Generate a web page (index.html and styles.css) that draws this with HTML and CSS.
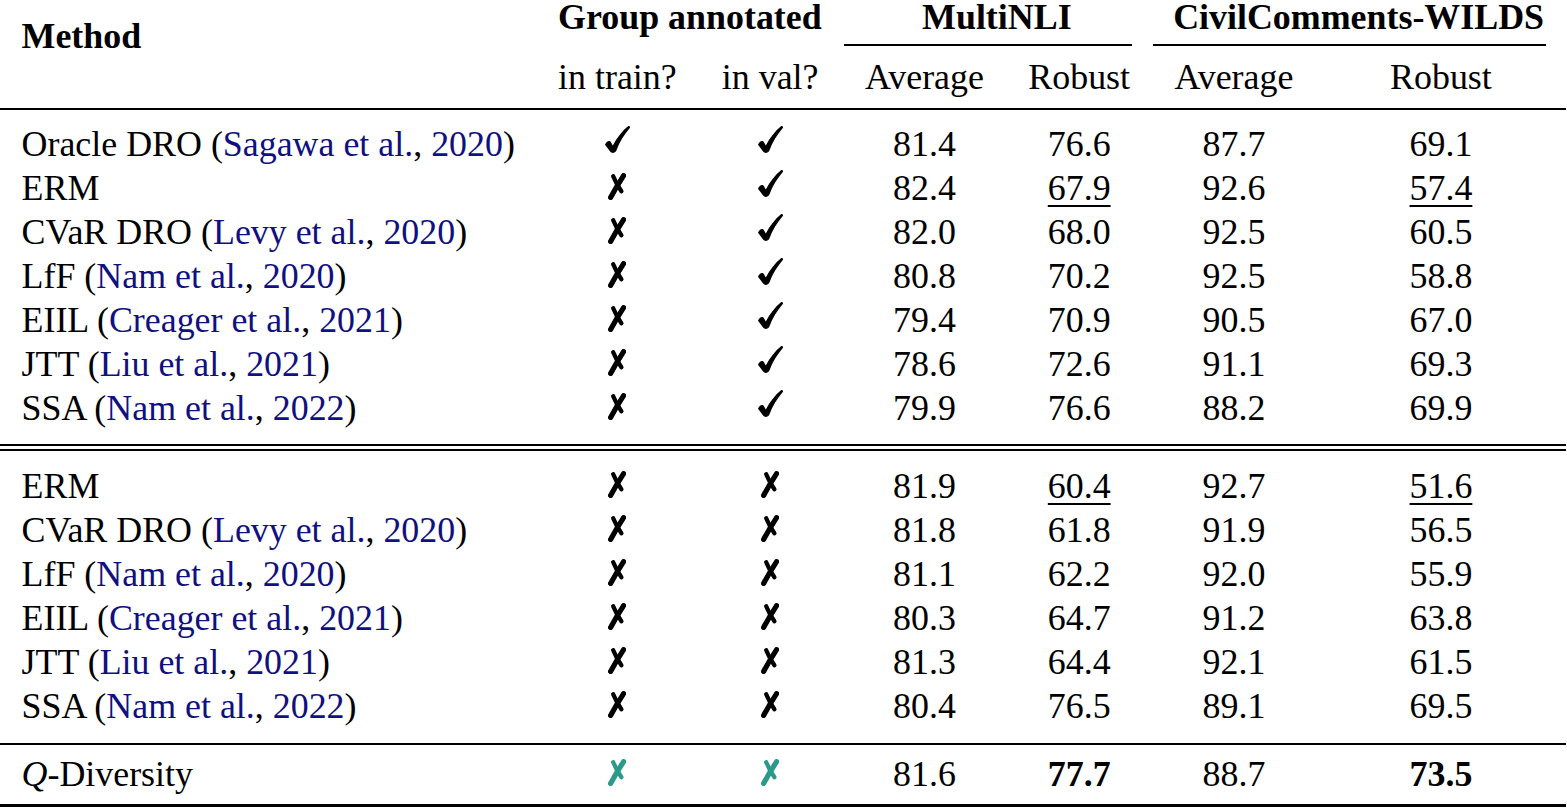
FILE: index.html
```html
<!DOCTYPE html>
<html lang="en">
<head>
<meta charset="utf-8">
<title>Results table</title>
<link rel="stylesheet" href="styles.css">
</head>
<body>
<svg class="defs" width="0" height="0" aria-hidden="true">
  <defs>
    <symbol id="cmark" viewBox="0 0 25 27">
      <path d="M0,18.8 C0.8,16.2 3,14.6 4.6,15 C5.8,15.3 6.6,17.2 7.8,19.6 C12,11.5 17.2,4.8 23,0.2 C24.2,-0.5 25.6,0.9 24.8,2.1 C19,8.8 14.6,16.2 11.4,24.4 C10.4,27 6.8,27.8 5.3,25.8 C3.6,23.5 1.8,21 0,18.8 Z" fill="currentColor"/>
    </symbol>
    <symbol id="xmark" viewBox="0 0 18 27">
      <path d="M15.6 2.6 Q8.8 13 2.6 24.4" stroke="currentColor" stroke-width="5.2" stroke-linecap="round" fill="none"/>
      <path d="M5.2 3.2 Q8.4 11 13.4 18.2" stroke="currentColor" stroke-width="4.3" stroke-linecap="round" fill="none"/>
    </symbol>
  </defs>
</svg>
<table class="results">
  <colgroup>
    <col class="w-method"><col class="w-train"><col class="w-val"><col class="w-avg"><col class="w-rob"><col class="w-avg"><col class="w-rob2">
  </colgroup>
  <thead>
    <tr class="h1">
      <th class="method" rowspan="2">Method</th>
      <th colspan="2" class="top">Group annotated</th>
      <th colspan="2" class="top"><div class="cmid">MultiNLI</div></th>
      <th colspan="2" class="top"><div class="cmid">CivilComments-WILDS</div></th>
    </tr>
    <tr class="h2">
      <th>in train?</th><th>in val?</th><th>Average</th><th>Robust</th><th>Average</th><th>Robust</th>
    </tr>
  </thead>
  <tbody class="g1">
    <tr><td class="m">Oracle DRO (<a class="cite">Sagawa et al.</a>, <a class="cite">2020</a>)</td><td><svg class="ck"><use href="#cmark"/></svg></td><td><svg class="ck"><use href="#cmark"/></svg></td><td>81.4</td><td>76.6</td><td>87.7</td><td>69.1</td></tr>
    <tr><td class="m">ERM</td><td><svg class="xk"><use href="#xmark"/></svg></td><td><svg class="ck"><use href="#cmark"/></svg></td><td>82.4</td><td><span class="ul">67.9</span></td><td>92.6</td><td><span class="ul">57.4</span></td></tr>
    <tr><td class="m">CVaR DRO (<a class="cite">Levy et al.</a>, <a class="cite">2020</a>)</td><td><svg class="xk"><use href="#xmark"/></svg></td><td><svg class="ck"><use href="#cmark"/></svg></td><td>82.0</td><td>68.0</td><td>92.5</td><td>60.5</td></tr>
    <tr><td class="m">LfF (<a class="cite">Nam et al.</a>, <a class="cite">2020</a>)</td><td><svg class="xk"><use href="#xmark"/></svg></td><td><svg class="ck"><use href="#cmark"/></svg></td><td>80.8</td><td>70.2</td><td>92.5</td><td>58.8</td></tr>
    <tr><td class="m">EIIL (<a class="cite">Creager et al.</a>, <a class="cite">2021</a>)</td><td><svg class="xk"><use href="#xmark"/></svg></td><td><svg class="ck"><use href="#cmark"/></svg></td><td>79.4</td><td>70.9</td><td>90.5</td><td>67.0</td></tr>
    <tr><td class="m">JTT (<a class="cite">Liu et al.</a>, <a class="cite">2021</a>)</td><td><svg class="xk"><use href="#xmark"/></svg></td><td><svg class="ck"><use href="#cmark"/></svg></td><td>78.6</td><td>72.6</td><td>91.1</td><td>69.3</td></tr>
    <tr><td class="m">SSA (<a class="cite">Nam et al.</a>, <a class="cite">2022</a>)</td><td><svg class="xk"><use href="#xmark"/></svg></td><td><svg class="ck"><use href="#cmark"/></svg></td><td>79.9</td><td>76.6</td><td>88.2</td><td>69.9</td></tr>
  </tbody>
  <tbody class="g2">
    <tr><td class="m">ERM</td><td><svg class="xk"><use href="#xmark"/></svg></td><td><svg class="xk"><use href="#xmark"/></svg></td><td>81.9</td><td><span class="ul">60.4</span></td><td>92.7</td><td><span class="ul">51.6</span></td></tr>
    <tr><td class="m">CVaR DRO (<a class="cite">Levy et al.</a>, <a class="cite">2020</a>)</td><td><svg class="xk"><use href="#xmark"/></svg></td><td><svg class="xk"><use href="#xmark"/></svg></td><td>81.8</td><td>61.8</td><td>91.9</td><td>56.5</td></tr>
    <tr><td class="m">LfF (<a class="cite">Nam et al.</a>, <a class="cite">2020</a>)</td><td><svg class="xk"><use href="#xmark"/></svg></td><td><svg class="xk"><use href="#xmark"/></svg></td><td>81.1</td><td>62.2</td><td>92.0</td><td>55.9</td></tr>
    <tr><td class="m">EIIL (<a class="cite">Creager et al.</a>, <a class="cite">2021</a>)</td><td><svg class="xk"><use href="#xmark"/></svg></td><td><svg class="xk"><use href="#xmark"/></svg></td><td>80.3</td><td>64.7</td><td>91.2</td><td>63.8</td></tr>
    <tr><td class="m">JTT (<a class="cite">Liu et al.</a>, <a class="cite">2021</a>)</td><td><svg class="xk"><use href="#xmark"/></svg></td><td><svg class="xk"><use href="#xmark"/></svg></td><td>81.3</td><td>64.4</td><td>92.1</td><td>61.5</td></tr>
    <tr><td class="m">SSA (<a class="cite">Nam et al.</a>, <a class="cite">2022</a>)</td><td><svg class="xk"><use href="#xmark"/></svg></td><td><svg class="xk"><use href="#xmark"/></svg></td><td>80.4</td><td>76.5</td><td>89.1</td><td>69.5</td></tr>
  </tbody>
  <tbody class="g3">
    <tr><td class="m"><i class="calq">Q</i>-Diversity</td><td><svg class="xk teal"><use href="#xmark"/></svg></td><td><svg class="xk teal"><use href="#xmark"/></svg></td><td>81.6</td><td><b>77.7</b></td><td>88.7</td><td><b>73.5</b></td></tr>
  </tbody>
</table>
</body>
</html>
```

FILE: styles.css
```css
html, body {
  margin: 0;
  padding: 0;
  background: #ffffff;
}

.defs {
  position: absolute;
  width: 0;
  height: 0;
  overflow: hidden;
}

.results {
  font-family: "Liberation Serif", "Times New Roman", serif;
  font-size: 35.9px;
  color: #000;
  border-collapse: collapse;
  table-layout: fixed;
  width: 43.612em;
}

.w-method { width: 14.946em; }
.w-train { width: 4.505em; }
.w-val { width: 4.007em; }
.w-avg { width: 4.587em; }
.w-rob { width: 4.034em; }
.w-rob2 { width: 6.946em; }

.results th,
.results td {
  padding: 0 0.6em;
  line-height: 44px;
  font-weight: normal;
  text-align: center;
  white-space: nowrap;
  vertical-align: top;
}

.results .method,
.results .m {
  text-align: left;
}

.results .method {
  font-weight: bold;
  padding-top: 14px;
}

.h1 .top {
  font-weight: bold;
  line-height: 34px;
}

.cmid {
  margin-left: -0.55em;
  margin-right: -0.05em;
  padding-left: 0.55em;
  padding-right: 0.05em;
  padding-bottom: 10px;
  border-bottom: 2px solid #000;
}

.h2 th {
  padding-top: 9px;
  padding-bottom: 9px;
}

thead {
  border-bottom: 2px solid #000;
}

.g1 tr:first-child td { padding-top: 12px; }
.g1 tr:last-child td { padding-bottom: 13.5px; }

.g2 {
  border-top: 7px double #000;
}
.g2 tr:first-child td { padding-top: 13.5px; }
.g2 tr:last-child td { padding-bottom: 15px; }

.g3 {
  border-top: 2px solid #000;
  border-bottom: 3px solid #000;
}
.g3 td {
  padding-top: 7px;
  padding-bottom: 8px;
}

.cite {
  color: #10107f;
  text-decoration: none;
}

.ul {
  text-decoration: underline;
  text-decoration-thickness: 1.5px;
  text-underline-offset: 5px;
}

.calq {
  font-style: italic;
}

.ck {
  width: 25px;
  height: 27px;
  vertical-align: 3px;
  color: #000;
}

.xk {
  width: 18px;
  height: 27px;
  vertical-align: 0;
  color: #000;
}

.xk.teal {
  color: #2b9a8a;
}
```
